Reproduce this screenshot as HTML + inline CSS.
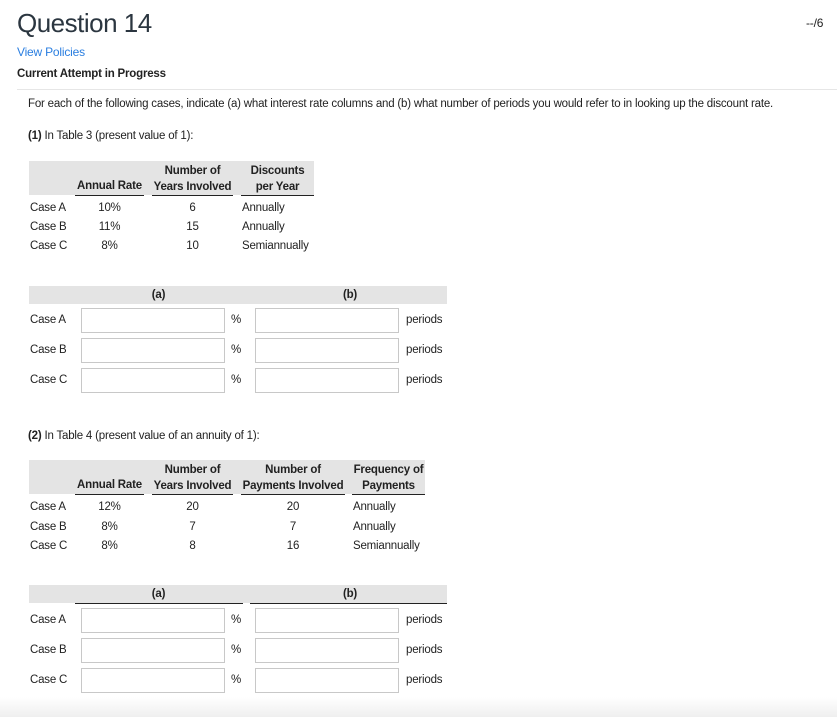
<!DOCTYPE html>
<html><head><meta charset="utf-8"><style>
*{margin:0;padding:0;box-sizing:border-box}
body{width:837px;height:717px;position:relative;overflow:hidden;background:#fff;font-family:"Liberation Sans",sans-serif;color:#222;font-size:11.5px;letter-spacing:-0.2px}
.a{position:absolute;white-space:nowrap;line-height:14px}
.b{font-weight:bold}
.c{text-align:center}
.g{position:absolute;background:#e4e4e4}
.l{position:absolute;height:1px;background:#222}
.i{position:absolute;width:144px;height:25px;border:1px solid #c8c8c8;background:#fff}
</style></head><body>
<div class="a" style="left:17px;top:8px;font-size:26px;line-height:30px;color:#2b3640;letter-spacing:-0.5px">Question 14</div>
<div class="a" style="left:806px;top:16px;font-size:12px">--/6</div>
<div class="a" style="left:17px;top:45px;color:#2a7ee0;font-size:12px">View Policies</div>
<div class="a b" style="left:17px;top:67px;font-size:11.5px">Current Attempt in Progress</div>
<div style="position:absolute;left:17px;top:89px;width:820px;height:1px;background:#e6e6e6"></div>
<div class="a" style="left:28px;top:97px;font-size:11.5px">For each of the following cases, indicate (a) what interest rate columns and (b) what number of periods you would refer to in looking up the discount rate.</div>
<div class="a" style="left:28px;top:129px"><b>(1)</b> In Table 3 (present value of 1):</div>

<div class="g" style="left:29px;top:161px;width:285px;height:34px"></div>
<div class="a b c" style="left:75px;top:179px;width:69px">Annual Rate</div>
<div class="a b c" style="left:152px;top:163px;width:81px;line-height:16px">Number of<br>Years Involved</div>
<div class="a b c" style="left:241px;top:163px;width:73px;line-height:16px">Discounts<br>per Year</div>
<div class="l" style="left:75px;top:195px;width:69px"></div>
<div class="l" style="left:152px;top:195px;width:81px"></div>
<div class="l" style="left:241px;top:195px;width:73px"></div>
<div class="a" style="left:30px;top:199px;line-height:19px">Case A<br>Case B<br>Case C</div>
<div class="a c" style="left:75px;top:199px;width:69px;line-height:19px">10%<br>11%<br>8%</div>
<div class="a c" style="left:152px;top:199px;width:81px;line-height:19px">6<br>15<br>10</div>
<div class="a" style="left:242px;top:199px;line-height:19px">Annually<br>Annually<br>Semiannually</div>

<div class="g" style="left:29px;top:286px;width:418px;height:18px"></div>
<div class="a b c" style="left:81px;top:288px;width:155px">(a)</div>
<div class="a b c" style="left:255px;top:288px;width:190px">(b)</div>

<div class="a" style="left:30px;top:313px">Case A</div><div class="i" style="left:81px;top:308px"></div><div class="a" style="left:231px;top:313px">%</div><div class="i" style="left:255px;top:308px"></div><div class="a" style="left:406px;top:313px">periods</div>
<div class="a" style="left:30px;top:343px">Case B</div><div class="i" style="left:81px;top:338px"></div><div class="a" style="left:231px;top:343px">%</div><div class="i" style="left:255px;top:338px"></div><div class="a" style="left:406px;top:343px">periods</div>
<div class="a" style="left:30px;top:373px">Case C</div><div class="i" style="left:81px;top:368px"></div><div class="a" style="left:231px;top:373px">%</div><div class="i" style="left:255px;top:368px"></div><div class="a" style="left:406px;top:373px">periods</div>

<div class="a" style="left:28px;top:429px"><b>(2)</b> In Table 4 (present value of an annuity of 1):</div>

<div class="g" style="left:29px;top:460px;width:396px;height:34px"></div>
<div class="a b c" style="left:75px;top:478px;width:69px">Annual Rate</div>
<div class="a b c" style="left:152px;top:462px;width:81px;line-height:16px">Number of<br>Years Involved</div>
<div class="a b c" style="left:241px;top:462px;width:104px;line-height:16px">Number of<br>Payments Involved</div>
<div class="a b c" style="left:352px;top:462px;width:73px;line-height:16px">Frequency of<br>Payments</div>
<div class="l" style="left:75px;top:494px;width:69px"></div>
<div class="l" style="left:152px;top:494px;width:81px"></div>
<div class="l" style="left:241px;top:494px;width:104px"></div>
<div class="l" style="left:352px;top:494px;width:73px"></div>
<div class="a" style="left:30px;top:498px;line-height:19.5px">Case A<br>Case B<br>Case C</div>
<div class="a c" style="left:75px;top:498px;width:69px;line-height:19.5px">12%<br>8%<br>8%</div>
<div class="a c" style="left:152px;top:498px;width:81px;line-height:19.5px">20<br>7<br>8</div>
<div class="a c" style="left:241px;top:498px;width:104px;line-height:19.5px">20<br>7<br>16</div>
<div class="a" style="left:353px;top:498px;line-height:19.5px">Annually<br>Annually<br>Semiannually</div>

<div class="g" style="left:29px;top:585px;width:418px;height:18px"></div>
<div class="a b c" style="left:81px;top:587px;width:155px">(a)</div>
<div class="a b c" style="left:255px;top:587px;width:190px">(b)</div>
<div class="l" style="left:75px;top:603px;width:168px"></div>
<div class="l" style="left:250px;top:603px;width:197px"></div>

<div style="position:absolute;left:0;top:697px;width:837px;height:20px;background:linear-gradient(#fff,#efefef)"></div>

<div class="a" style="left:30px;top:613px">Case A</div><div class="i" style="left:81px;top:608px"></div><div class="a" style="left:231px;top:613px">%</div><div class="i" style="left:255px;top:608px"></div><div class="a" style="left:406px;top:613px">periods</div>
<div class="a" style="left:30px;top:643px">Case B</div><div class="i" style="left:81px;top:638px"></div><div class="a" style="left:231px;top:643px">%</div><div class="i" style="left:255px;top:638px"></div><div class="a" style="left:406px;top:643px">periods</div>
<div class="a" style="left:30px;top:673px">Case C</div><div class="i" style="left:81px;top:668px"></div><div class="a" style="left:231px;top:673px">%</div><div class="i" style="left:255px;top:668px"></div><div class="a" style="left:406px;top:673px">periods</div>
</body></html>
